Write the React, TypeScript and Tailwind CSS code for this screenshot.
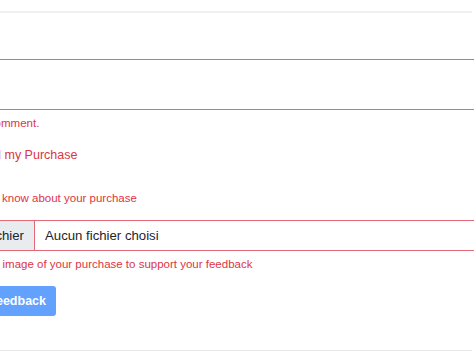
import type { ReactNode } from 'react'

// prefix that sits to the left of the visible edge (the form is cropped on the left)
function Cut({ children }: { children: ReactNode }) {
  return <span className="inline-flex w-0 justify-end whitespace-pre">{children}</span>
}

export default function App() {
  return (
    <div className="w-[474px] h-[355px] overflow-hidden bg-white text-[#212529] font-['Liberation_Sans',Arial,sans-serif]">
      <div className="pt-[11px]">
        <div className="h-[2px] mr-[2px] bg-[#efefef]" />

        <div className="h-[46px]" />

        <div className="h-[51px] border-y border-[#e06b77]" />
        <p className="mt-[5px] pl-[1px] text-[11.5px] leading-[16px] text-[#dc3545]">
          <Cut>Please enter a co</Cut>mment.
        </p>

        <label className="mt-[15px] block pl-[1px] text-[12.5px] leading-[18px] text-[#dc3545]">
          <Cut>Recommend</Cut> my Purchase
        </label>

        <p className="mt-[26px] pl-[2px] text-[11.5px] leading-[16px] text-[#dc3545]">
          <Cut>Please let us </Cut>know about your purchase
        </p>

        <div className="mt-[14px] flex h-[31px] items-stretch border-y border-[#e06b77] text-[13.2px]">
          <div className="flex w-[35px] shrink-0 justify-end border-r border-[#e06b77]">
            <span className="flex shrink-0 items-center whitespace-nowrap bg-[#e9ecef] pl-3 pr-[10px]">
              Choisir un fichier
            </span>
          </div>
          <span className="flex items-center pl-[10px]">Aucun fichier choisi</span>
        </div>
        <p className="mt-[5px] pl-[2.5px] text-[11.5px] leading-[16px] text-[#dc3545]">
          <Cut>Upload an </Cut>image of your purchase to support your feedback
        </p>

        <div className="mt-[14px] flex w-[56px] justify-end">
          <button
            type="button"
            className="h-[30px] shrink-0 whitespace-nowrap rounded-[3px] bg-[#62a1fe] pl-3 pr-[10px] text-[12.5px] font-bold text-white"
          >
            Submit Feedback
          </button>
        </div>

        <div className="mt-[34px] h-px mr-[2px] bg-[#e8e8e8]" />
      </div>
    </div>
  )
}
